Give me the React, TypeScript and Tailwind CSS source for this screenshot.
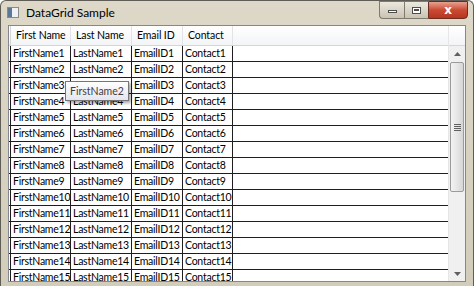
import React from 'react';

const rows = Array.from({ length: 15 }, (_, i) => i + 1);

// widths of the four data columns, px
const cols = ['w-[60px]', 'w-[61px]', 'w-[51px]', 'w-[50px]'];
const headers = ['First Name', 'Last Name', 'Email ID', 'Contact'];

const TitleButtons: React.FC = () => (
    <div className="flex h-[18px] items-stretch self-start">
        <div className="w-[25px] rounded-bl-[4px] border border-r-0 border-[#7d7a70] bg-gradient-to-b from-[#ece8de] to-[#c9c3b2] flex items-center justify-center">
            <div className="mt-[3px] h-[3px] w-[9px] border border-[#4d4d4d] bg-white" />
        </div>
        <div className="w-[24px] border border-r-0 border-[#7d7a70] bg-gradient-to-b from-[#ece8de] to-[#c9c3b2] flex items-center justify-center">
            <div className="h-[7px] w-[9px] border border-[#4d4d4d] bg-white flex items-center justify-center">
                <div className="h-[2px] w-[5px] border border-[#4d4d4d]" />
            </div>
        </div>
        <div className="w-[40px] rounded-br-[4px] border border-[#6b2b20] bg-gradient-to-b from-[#e8a090] via-[#c94a33] to-[#b8341d] flex items-center justify-center">
            <span className="text-[12px] font-bold leading-none text-white" style={{ fontFamily: 'Verdana, "DejaVu Sans", sans-serif' }}>x</span>
        </div>
    </div>
);

const cell = 'border-r border-b border-[#1e1e1e] pl-[2px] whitespace-nowrap overflow-hidden';

export default function App() {
    return (
        <div
            className="relative w-[474px] h-[286px] overflow-hidden bg-gradient-to-b from-[#ddd8c8] to-[#d2ccba] rounded-t-[6px] border-l border-r border-t border-[#5f5d55] flex flex-col"
            style={{ fontFamily: 'Lato, "Noto Sans", sans-serif' }}
        >
            {/* Title bar */}
            <div className="h-[24px] flex items-start pl-[6px] pr-[5px] shrink-0">
                <div className="mt-[6px] h-[11px] w-[12px] border border-[#8a8a8a] bg-[#eef1f5] flex">
                    <div className="w-[4px] bg-[#5b7896]" />
                </div>
                <span className="ml-[7px] mt-[4px] text-[12px] text-black leading-[16px]">DataGrid Sample</span>
                <div className="flex-1" />
                <TitleButtons />
            </div>

            {/* Client area */}
            <div className="flex-1 px-[7px] pb-[4px] min-h-0">
                <div className="h-full border border-[#828790] bg-white flex overflow-hidden">
                    <div className="flex-1 flex flex-col min-w-0">
                        {/* header */}
                        <div className="h-[20px] flex shrink-0 bg-gradient-to-b from-[#ffffff] to-[#f3f4f6] border-b border-[#d5d5d5] text-[10.5px] tracking-[-0.1px] text-black">
                            <div className="w-[2px] border-r border-[#d5d5d5]" />
                            {headers.map((h, i) => (
                                <div key={h} className={`${cols[i]} border-r border-[#e2e3e6] pl-[5px] flex items-center whitespace-nowrap`}>
                                    {h}
                                </div>
                            ))}
                            <div className="flex-1" />
                        </div>
                        {/* rows */}
                        {rows.map(n => (
                            <div key={n} className="h-[16px] flex shrink-0 text-[10.5px] tracking-[-0.25px] text-black leading-[15px]">
                                <div className="w-[2px] border-r border-b border-[#1e1e1e]" />
                                <div className={`${cols[0]} ${cell}`}>FirstName{n}</div>
                                <div className={`${cols[1]} ${cell}`}>LastName{n}</div>
                                <div className={`${cols[2]} ${cell}`}>EmailID{n}</div>
                                <div className={`${cols[3]} ${cell}`}>Contact{n}</div>
                                <div className="flex-1 border-b border-[#1e1e1e]" />
                            </div>
                        ))}
                    </div>

                    {/* vertical scrollbar */}
                    <div className="w-[17px] shrink-0 flex flex-col bg-[#f0f0f0] border-l border-[#e6e6e6]">
                        <div className="h-[20px] bg-gradient-to-b from-white to-[#f3f4f6] border-b border-[#d5d5d5]" />
                        <div className="h-[16px] flex items-center justify-center">
                            <svg width="7" height="4" viewBox="0 0 7 4"><path d="M0 4 L3.5 0 L7 4 Z" fill="#606060" /></svg>
                        </div>
                        <div className="mx-[1px] h-[130px] rounded-[2px] border border-[#9b9b9b] bg-gradient-to-r from-[#f3f3f3] via-[#e6e6e6] to-[#d6d6d6] flex flex-col items-center justify-center gap-[1px]">
                            <div className="h-[1px] w-[7px] bg-[#606060]" />
                            <div className="h-[1px] w-[7px] bg-[#606060]" />
                            <div className="h-[1px] w-[7px] bg-[#606060]" />
                            <div className="h-[1px] w-[7px] bg-[#606060]" />
                        </div>
                        <div className="flex-1" />
                        <div className="h-[14px] flex items-center justify-center">
                            <svg width="7" height="4" viewBox="0 0 7 4"><path d="M0 0 L3.5 4 L7 0 Z" fill="#606060" /></svg>
                        </div>
                    </div>
                </div>
            </div>

            {/* tooltip */}
            <div className="absolute left-[64px] top-[80px] h-[20px] px-[4px] border border-[#767676] bg-gradient-to-b from-white to-[#e4e5f0] shadow-[2px_2px_3px_rgba(0,0,0,0.35)] text-[10.5px] text-[#3f3f3f] leading-[18px]">
                FirstName2
            </div>
        </div>
    );
}
